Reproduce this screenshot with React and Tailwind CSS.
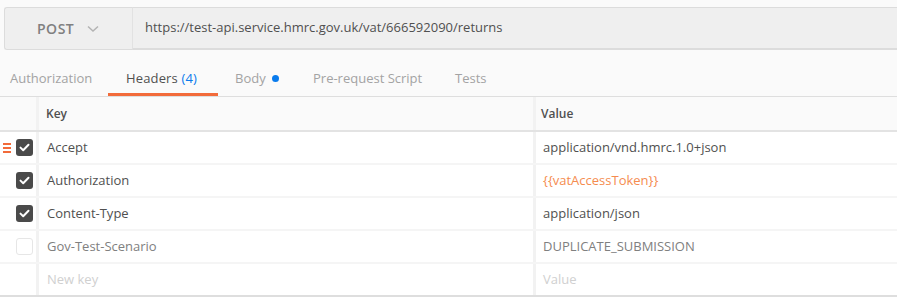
import React from 'react';

const rows = [
  { key: 'Accept', value: 'application/vnd.hmrc.1.0+json', checked: true, handle: true },
  { key: 'Authorization', value: '{{vatAccessToken}}', checked: true, variable: true },
  { key: 'Content-Type', value: 'application/json', checked: true },
  { key: 'Gov-Test-Scenario', value: 'DUPLICATE_SUBMISSION', checked: false },
];

function Checkbox({ checked }) {
  if (!checked) {
    return <div className="w-[17px] h-[17px] rounded-[3px] border border-[#e6e6e6] bg-white" />;
  }
  return (
    <div className="w-[17px] h-[17px] rounded-[3px] bg-[#4a4a4a] flex items-center justify-center">
      <svg width="11" height="9" viewBox="0 0 11 9" fill="none">
        <path d="M1.5 4.6 L4.2 7.2 L9.5 1.8" stroke="white" strokeWidth="2" strokeLinecap="round" strokeLinejoin="round" />
      </svg>
    </div>
  );
}

function Handle() {
  return (
    <div className="flex flex-col gap-[2px] w-[8px]">
      <div className="h-[2px] bg-[#f26b3a]" />
      <div className="h-[2px] bg-[#f26b3a]" />
      <div className="h-[2px] bg-[#f26b3a]" />
    </div>
  );
}

export default function App() {
  return (
    <div
      className="w-[897px] h-[297px] bg-[#fafafa] overflow-hidden text-[#505050]"
      style={{ fontFamily: '"Open Sans", "Noto Sans", sans-serif' }}
    >
      {/* Request bar */}
      <div className="pt-[7px] pl-[4px] flex h-[50px]">
        <div className="w-[128px] flex items-center gap-[13px] bg-[#efefef] border border-[#dcdcdc] border-r-0 rounded-l-[3px] pl-[32px]">
          <span className="text-[14px] font-semibold text-[#808080] tracking-[0.5px]">POST</span>
          <svg width="12" height="8" viewBox="0 0 12 8" fill="none">
            <path d="M1 1.5 L6 6 L11 1.5" stroke="#b3b3b3" strokeWidth="1.5" />
          </svg>
        </div>
        <div className="flex-1 flex items-center bg-[#efefef] border-t border-[#dcdcdc] border-b-2 border-l border-l-[#e2e2e2] pl-[12px] pb-[1px]">
          <span className="text-[13px] text-[#505050]">https://test-api.service.hmrc.gov.uk/vat/666592090/returns</span>
        </div>
      </div>

      {/* Tabs */}
      <div className="flex h-[47px] items-end border-b border-[#dedede] text-[13px]">
        <div className="ml-[10px] w-[98px] pb-[8px] text-[#a3a3a3]">Authorization</div>
        <div className="w-[110px] pb-[5px] border-b-[3px] border-[#f26b3a] pl-[18px] text-[#505050] tracking-[0.15px]">
          Headers <span className="text-[#097bed]">(4)</span>
        </div>
        <div className="ml-[17px] w-[78px] pb-[8px] text-[#a3a3a3] flex items-center gap-[6px]">
          Body <span className="w-[7px] h-[7px] rounded-full bg-[#097bed] inline-block" />
        </div>
        <div className="w-[142px] pb-[8px] text-[#a3a3a3]">Pre-request Script</div>
        <div className="pb-[8px] text-[#a3a3a3]">Tests</div>
      </div>

      {/* Table */}
      <div className="border-b-2 border-[#dedede]">
        <div className="flex h-[35px] border-b-2 border-[#e3e3e3] text-[12px] font-semibold text-[#505050]">
          <div className="w-[36px]" />
          <div className="w-[3px] bg-[#f2f2f2]" />
          <div className="w-[494px] flex items-center pl-[7px] pt-[1px]">Key</div>
          <div className="w-[3px] bg-[#f2f2f2]" />
          <div className="flex-1 flex items-center pl-[5px] pt-[1px]">Value</div>
        </div>
        {rows.map((r) => (
          <div key={r.key} className="flex h-[33px] border-b-2 border-[#f5f5f5] text-[13px] bg-white">
            <div className="w-[36px] flex items-center justify-end pr-[3px] gap-[5px]">
              {r.handle && <Handle />}
              <Checkbox checked={r.checked} />
            </div>
            <div className="w-[3px] bg-[#f2f2f2]" />
            <div className={`w-[494px] flex items-center pl-[8px] ${r.checked ? 'text-[#505050]' : 'text-[#808080]'}`}>{r.key}</div>
            <div className="w-[3px] bg-[#f2f2f2]" />
            <div
              className={`flex-1 flex items-center pl-[7px] ${
                r.variable ? 'text-[#f58c4f]' : r.checked ? 'text-[#505050]' : 'text-[#808080]'
              }`}
            >
              {r.value}
            </div>
          </div>
        ))}
        <div className="flex h-[31px] text-[13px] bg-white">
          <div className="w-[36px]" />
          <div className="w-[3px] bg-[#f2f2f2]" />
          <div className="w-[494px] flex items-center pl-[8px] text-[#d0d0d0]">New key</div>
          <div className="w-[3px] bg-[#f2f2f2]" />
          <div className="flex-1 flex items-center pl-[7px] text-[#d0d0d0]">Value</div>
        </div>
      </div>
    </div>
  );
}
